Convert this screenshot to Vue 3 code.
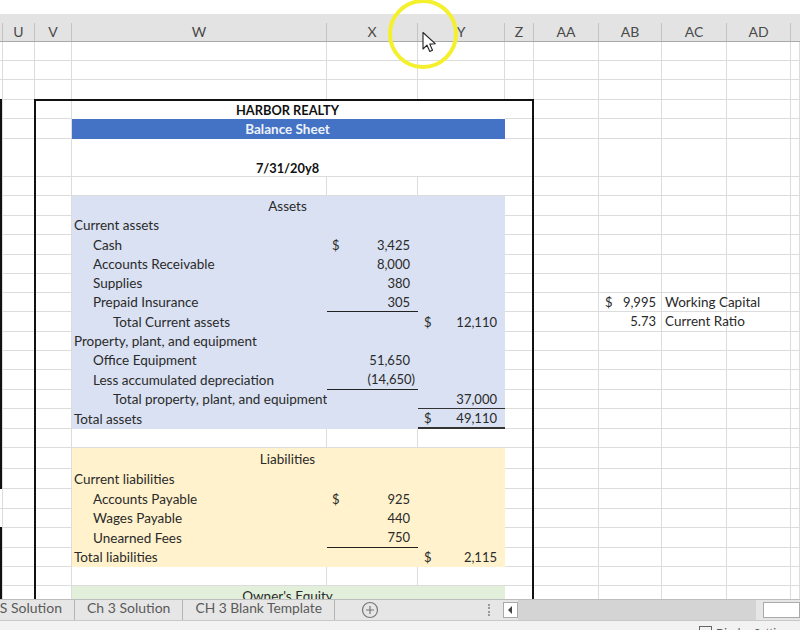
<script setup>
const columns = ['U', 'V', 'W', 'X', 'Y', 'Z', 'AA', 'AB', 'AC', 'AD']

const rows = [
  { h: 19 },
  { h: 19 },
  { h: 20 },
  { h: 19, title: 'HARBOR REALTY', bold: true, small: true },
  { h: 20, title: 'Balance Sheet', bold: true, fill: 'head' },
  { h: 38, title: '7/31/20y8', bold: true, tall: true, small: true },
  { h: 19, blank: true },
  { h: 20, title: 'Assets', fill: 'blue' },
  { h: 19, label: 'Current assets', fill: 'blue' },
  { h: 20, label: 'Cash', indent: 1, fill: 'blue', xs: '$', x: '3,425' },
  { h: 19, label: 'Accounts Receivable', indent: 1, fill: 'blue', x: '8,000' },
  { h: 19, label: 'Supplies', indent: 1, fill: 'blue', x: '380' },
  { h: 19, label: 'Prepaid Insurance', indent: 1, fill: 'blue', x: '305', xline: true, ab: ['$', '9,995'], ac: 'Working Capital' },
  { h: 20, label: 'Total Current assets', indent: 2, fill: 'blue', ys: '$', y: '12,110', ab: ['', '5.73'], ac: 'Current Ratio' },
  { h: 19, label: 'Property, plant, and equipment', fill: 'blue' },
  { h: 19, label: 'Office Equipment', indent: 1, fill: 'blue', x: '51,650' },
  { h: 20, label: 'Less accumulated depreciation', indent: 1, fill: 'blue', x: '(14,650)', paren: true, xline: true },
  { h: 19, label: 'Total property, plant, and equipment', indent: 2, fill: 'blue', y: '37,000', yline: 'thin' },
  { h: 20, label: 'Total assets', fill: 'blue', ys: '$', y: '49,110', yline: 'double' },
  { h: 19, blank: true },
  { h: 21, title: 'Liabilities', fill: 'yellow' },
  { h: 20, label: 'Current liabilities', fill: 'yellow' },
  { h: 20, label: 'Accounts Payable', indent: 1, fill: 'yellow', xs: '$', x: '925' },
  { h: 19, label: 'Wages Payable', indent: 1, fill: 'yellow', x: '440' },
  { h: 20, label: 'Unearned Fees', indent: 1, fill: 'yellow', x: '750', xline: true },
  { h: 19, label: 'Total liabilities', fill: 'yellow', ys: '$', y: '2,115' },
  { h: 19, blank: true },
  { h: 20, title: "Owner's Equity", fill: 'green' }
]
</script>

<template>
  <div class="page">
    <div class="top"></div>

    <div class="col-head">
      <div class="head-stub"></div>
      <div v-for="col in columns" :key="col" class="head-cell">{{ col }}</div>
      <div class="head-rest"></div>
    </div>

    <div class="sheet">
      <div v-for="(row, i) in rows" :key="i" class="row" :style="{ height: row.h + 'px' }">
        <div class="c"></div>
        <div class="c"></div>
        <div class="c"></div>

        <div v-if="row.title" :class="['merged', row.fill, { bold: row.bold, tall: row.tall, small: row.small }]">{{ row.title }}</div>
        <template v-else-if="row.blank">
          <div class="c"></div>
          <div class="c"></div>
          <div class="c no-right"></div>
        </template>
        <template v-else-if="row.fill">
          <div :class="['label', row.fill, 'indent-' + (row.indent || 0)]">{{ row.label }}</div>
          <div :class="['amount', row.fill, { line: row.xline, paren: row.paren }]">
            <span>{{ row.xs }}</span><span>{{ row.x }}</span>
          </div>
          <div :class="['amount', 'amount-y', row.fill, row.yline]">
            <span>{{ row.ys }}</span><span>{{ row.y }}</span>
          </div>
        </template>
        <template v-else>
          <div class="c"></div>
          <div class="c"></div>
          <div class="c"></div>
        </template>

        <div class="c"></div>
        <div class="c"></div>
        <div class="c ab">
          <template v-if="row.ab"><span>{{ row.ab[0] }}</span><span>{{ row.ab[1] }}</span></template>
        </div>
        <div class="c ac">{{ row.ac }}</div>
        <div class="c"></div>
        <div class="c"></div>
      </div>

      <div class="box box-main"></div>
      <div class="box box-left-a"></div>
      <div class="box box-left-b"></div>
    </div>

    <div class="tabs">
      <div class="tab tab-cut">ES Solution</div>
      <div class="tab">Ch 3 Solution</div>
      <div class="tab tab-last">CH 3 Blank Template</div>
      <svg class="add" width="18" height="18" viewBox="0 0 18 18">
        <circle cx="9" cy="9" r="7.5" fill="none" stroke="#777" stroke-width="1.2" />
        <path d="M9 5v8M5 9h8" stroke="#777" stroke-width="1.2" />
      </svg>
      <div class="dots"></div>
      <div class="scroll-btn">
        <svg width="5" height="8" viewBox="0 0 5 8"><path d="M4 0v8L0 4z" fill="#444" /></svg>
      </div>
      <div class="scroll-track"></div>
      <div class="scroll-end"></div>
    </div>

    <div class="status">
      <span class="check"></span>
      <span class="status-text">Display Settings</span>
    </div>

    <svg class="pointer" width="80" height="80" viewBox="0 0 80 80">
      <circle cx="40" cy="40" r="33" fill="none" stroke="#f4f02e" stroke-width="4" />
      <path d="M40 38.500v16.500l4-3.800 2.800 6.300 2.700-1.200-2.700-6.200 5.400-.4z" fill="#fff" stroke="#222" stroke-width="1.100" stroke-linejoin="round" />
    </svg>
  </div>
</template>

<style scoped>
.page {
  position: relative;
  width: 800px;
  height: 630px;
  display: flex;
  flex-direction: column;
  overflow: hidden;
  background: #fff;
  font-family: Lato, "Liberation Sans", sans-serif;
  font-size: 13.5px;
  color: #2a2a2a;
}

.top {
  height: 14px;
  flex: none;
}

.col-head {
  height: 28px;
  flex: none;
  display: grid;
  grid-template-columns: 3px 32px 37px 255px 91px 87px 29px 65px 63px 65px 64px 9px;
  background: #e3e3e3;
  border-bottom: 1px solid #a9a9a9;
  box-sizing: border-box;
  align-items: end;
}

.head-cell {
  height: 18px;
  border-right: 1px solid #c4c4c4;
  text-align: center;
  font-size: 14px;
  line-height: 18px;
  color: #4a4a4a;
}

.head-stub {
  height: 18px;
  border-right: 1px solid #c4c4c4;
}

.sheet {
  position: relative;
  flex: 1;
  overflow: hidden;
  min-height: 0;
}

.row {
  display: grid;
  grid-template-columns: 3px 32px 37px 255px 91px 87px 29px 65px 63px 65px 64px 9px;
}

.c {
  box-sizing: border-box;
  border-right: 1px solid #dcdcdc;
  border-bottom: 1px solid #dcdcdc;
  min-width: 0;
}

.no-right {
  border-right: none;
}

.merged {
  grid-column: span 3;
  display: flex;
  align-items: center;
  justify-content: center;
  padding-right: 2px;
  box-sizing: border-box;
}

.merged.tall {
  align-items: flex-end;
  border-bottom: 1px solid #dcdcdc;
}

.bold {
  font-weight: 700;
  color: #111;
}

.small {
  font-size: 12.8px;
}

.head {
  background: #4472c4;
  color: #eef2fb;
}

.blue {
  background: #d9e1f2;
}

.yellow {
  background: #fff2cc;
}

.green {
  background: #e2efda;
}

.label {
  display: flex;
  align-items: center;
  white-space: nowrap;
  padding: 0 0 1px 2px;
  box-sizing: border-box;
}

.indent-1 {
  padding-left: 21px;
}

.indent-2 {
  padding-left: 41px;
}

.amount {
  display: flex;
  align-items: center;
  justify-content: space-between;
  padding: 0 8px 1px 5px;
  box-sizing: border-box;
  font-size: 13px;
}

.amount-y {
  padding-left: 6px;
}

.amount.paren {
  padding-right: 3px;
}

.amount.line {
  border-bottom: 1px solid #222;
}

.amount.thin {
  border-bottom: 1px solid #333;
}

.amount.double {
  border-bottom: 2px solid #333;
}

.ab {
  display: flex;
  align-items: center;
  justify-content: space-between;
  padding: 0 5px 1px 6px;
  font-size: 13px;
}

.ac {
  display: flex;
  align-items: center;
  white-space: nowrap;
  padding: 0 0 1px 3px;
}

.box {
  position: absolute;
  box-sizing: border-box;
  pointer-events: none;
}

.box-main {
  top: 57px;
  left: 34px;
  width: 500px;
  height: 600px;
  border: 2px solid #111;
}

.box-left-a {
  top: 57px;
  left: -4px;
  width: 6px;
  height: 390px;
  border: 2px solid #111;
}

.box-left-b {
  top: 485px;
  left: -4px;
  width: 6px;
  height: 200px;
  border: 2px solid #111;
}

.tabs {
  height: 22px;
  flex: none;
  display: flex;
  align-items: center;
  background: #e6e6e6;
  border-top: 1px solid #bdbdbd;
  border-bottom: 1px solid #c9c9c9;
  box-sizing: border-box;
  color: #5a5a5a;
  font-size: 14px;
}

.tab {
  height: 100%;
  display: flex;
  align-items: center;
  padding: 0 12px 6px 12px;
  box-sizing: border-box;
  border-right: 1px solid #b4b4b4;
  white-space: nowrap;
}

.tab-cut {
  width: 75px;
  justify-content: flex-end;
  padding-left: 0;
  padding-right: 12px;
  overflow: hidden;
}

.tab-last {
  font-size: 13.8px;
}

.add {
  margin-left: 26px;
  flex: none;
}

.dots {
  width: 2px;
  height: 12px;
  margin-left: 109px;
  border-left: 2px dotted #999;
  flex: none;
}

.scroll-btn {
  width: 15px;
  height: 16px;
  margin-left: 11px;
  background: #fff;
  border: 1px solid #aaa;
  box-sizing: border-box;
  display: flex;
  align-items: center;
  justify-content: center;
  flex: none;
}

.scroll-track {
  flex: 1;
  height: 100%;
  background: #d4d4d4;
}

.scroll-end {
  width: 37px;
  height: 16px;
  background: #fff;
  border: 1px solid #aaa;
  box-sizing: border-box;
  margin-left: 7px;
  flex: none;
}

.status {
  height: 9px;
  flex: none;
  display: flex;
  align-items: flex-start;
  padding: 5px 0 0 699px;
  box-sizing: border-box;
  background: #f2f2f2;
  overflow: hidden;
  font-size: 11px;
  color: #555;
}

.check {
  width: 11px;
  height: 11px;
  border: 1px solid #666;
  margin-right: 4px;
  flex: none;
}

.status-text {
  white-space: nowrap;
}

.pointer {
  position: absolute;
  left: 383px;
  top: -6px;
  pointer-events: none;
}
</style>
